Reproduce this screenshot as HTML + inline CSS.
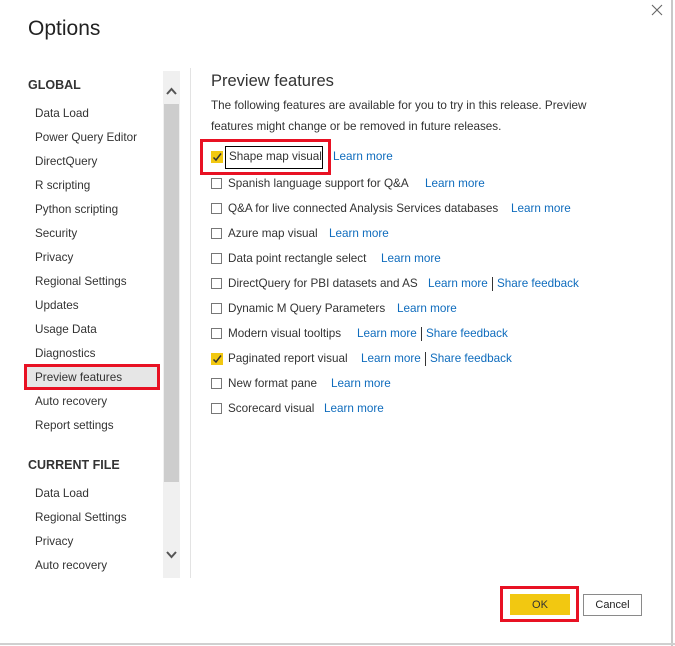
<!DOCTYPE html>
<html><head><meta charset="utf-8"><style>
body{margin:0;width:675px;height:646px;background:#fff;font-family:"Segoe UI","Liberation Sans",sans-serif;color:#333;position:relative;overflow:hidden}
.a{position:absolute;white-space:nowrap;font-size:11.7px;line-height:16px}
.n{left:35px;color:#333}
.h{left:28px;font-size:12.5px;font-weight:bold;color:#333}
.l{color:#0f6cbd}
.cb{position:absolute;left:211px;width:9px;height:9px;border:1.5px solid #777;background:#fff}
.ck{position:absolute;left:211px;width:12px;height:12px;background:#f2c811}
.sep{position:absolute;width:1px;height:14px;background:#333}
</style></head><body>
<div style="position:absolute;left:671px;top:0;width:2px;height:646px;background:#c8c8c8"></div>
<div style="position:absolute;left:0;top:643px;width:675px;height:2px;background:#d0d0d0"></div>
<svg style="position:absolute;left:650px;top:3px" width="14" height="14"><path d="M2 2 L12 12 M12 2 L2 12" stroke="#666" stroke-width="1.1" fill="none"/></svg>
<div class="a" style="left:28px;top:16px;font-size:21px;line-height:26px;color:#222">Options</div>

<div style="position:absolute;left:163px;top:71px;width:17px;height:507px;background:#f0f0f0"></div>
<div style="position:absolute;left:164px;top:104px;width:15px;height:378px;background:#cdcdcd"></div>
<svg style="position:absolute;left:164px;top:86px" width="15" height="10"><path d="M3 8 L7.5 3 L12 8" stroke="#555" stroke-width="2" fill="none"/></svg>
<svg style="position:absolute;left:164px;top:550px" width="15" height="10"><path d="M3 2 L7.5 7 L12 2" stroke="#555" stroke-width="2" fill="none"/></svg>
<div style="position:absolute;left:190px;top:68px;width:1px;height:510px;background:#e3e3e3"></div>

<div class="a h" style="top:77px">GLOBAL</div>
<div class="a n" style="top:106px">Data Load</div>
<div class="a n" style="top:130px">Power Query Editor</div>
<div class="a n" style="top:154px">DirectQuery</div>
<div class="a n" style="top:178px">R scripting</div>
<div class="a n" style="top:202px">Python scripting</div>
<div class="a n" style="top:226px">Security</div>
<div class="a n" style="top:250px">Privacy</div>
<div class="a n" style="top:274px">Regional Settings</div>
<div class="a n" style="top:298px">Updates</div>
<div class="a n" style="top:322px">Usage Data</div>
<div class="a n" style="top:346px">Diagnostics</div>
<div style="position:absolute;left:24px;top:364px;width:130px;height:20px;border:3px solid #e81123;background:#e6e6e6"></div>
<div class="a n" style="top:370px">Preview features</div>
<div class="a n" style="top:394px">Auto recovery</div>
<div class="a n" style="top:418px">Report settings</div>
<div class="a h" style="top:457px">CURRENT FILE</div>
<div class="a n" style="top:486px">Data Load</div>
<div class="a n" style="top:510px">Regional Settings</div>
<div class="a n" style="top:534px">Privacy</div>
<div class="a n" style="top:558px">Auto recovery</div>

<div class="a" style="left:211px;top:70px;font-size:16.5px;line-height:22px;color:#333">Preview features</div>
<div class="a" style="left:211px;top:98px;color:#333">The following features are available for you to try in this release. Preview</div>
<div class="a" style="left:211px;top:119px;color:#333">features might change or be removed in future releases.</div>

<div style="position:absolute;left:200px;top:139px;width:125px;height:30px;border:3px solid #e81123"></div>
<div style="position:absolute;left:225px;top:146px;width:96px;height:21px;border:1px solid #000"></div>
<div class="ck" style="top:151px"></div><svg style="position:absolute;left:211px;top:151px" width="12" height="12"><path d="M2.5 6.5 L5 9 L10 2.5" stroke="#333" stroke-width="1.5" fill="none"/></svg>
<div class="a" style="left:229px;top:149px">Shape map visual</div><div class="a l" style="left:333px;top:149px">Learn more</div>

<div class="cb" style="top:178px"></div><div class="a" style="left:228px;top:176px">Spanish language support for Q&amp;A</div><div class="a l" style="left:425px;top:176px">Learn more</div>
<div class="cb" style="top:203px"></div><div class="a" style="left:228px;top:201px">Q&amp;A for live connected Analysis Services databases</div><div class="a l" style="left:511px;top:201px">Learn more</div>
<div class="cb" style="top:228px"></div><div class="a" style="left:228px;top:226px">Azure map visual</div><div class="a l" style="left:329px;top:226px">Learn more</div>
<div class="cb" style="top:253px"></div><div class="a" style="left:228px;top:251px">Data point rectangle select</div><div class="a l" style="left:381px;top:251px">Learn more</div>
<div class="cb" style="top:278px"></div><div class="a" style="left:228px;top:276px">DirectQuery for PBI datasets and AS</div><div class="a l" style="left:428px;top:276px">Learn more</div><div class="sep" style="left:492px;top:277px"></div><div class="a l" style="left:497px;top:276px">Share feedback</div>
<div class="cb" style="top:303px"></div><div class="a" style="left:228px;top:301px">Dynamic M Query Parameters</div><div class="a l" style="left:397px;top:301px">Learn more</div>
<div class="cb" style="top:328px"></div><div class="a" style="left:228px;top:326px">Modern visual tooltips</div><div class="a l" style="left:357px;top:326px">Learn more</div><div class="sep" style="left:421px;top:327px"></div><div class="a l" style="left:426px;top:326px">Share feedback</div>
<div class="ck" style="top:353px"></div><svg style="position:absolute;left:211px;top:353px" width="12" height="12"><path d="M2.5 6.5 L5 9 L10 2.5" stroke="#333" stroke-width="1.5" fill="none"/></svg>
<div class="a" style="left:228px;top:351px">Paginated report visual</div><div class="a l" style="left:361px;top:351px">Learn more</div><div class="sep" style="left:425px;top:352px"></div><div class="a l" style="left:430px;top:351px">Share feedback</div>
<div class="cb" style="top:378px"></div><div class="a" style="left:228px;top:376px">New format pane</div><div class="a l" style="left:331px;top:376px">Learn more</div>
<div class="cb" style="top:403px"></div><div class="a" style="left:228px;top:401px">Scorecard visual</div><div class="a l" style="left:324px;top:401px">Learn more</div>

<div style="position:absolute;left:500px;top:586px;width:73px;height:30px;border:3px solid #e81123"></div>
<div style="position:absolute;left:510px;top:594px;width:60px;height:21px;background:#f2c811;font-size:11px;line-height:22px;text-align:center;color:#333">OK</div>
<div style="position:absolute;left:583px;top:594px;width:57px;height:20px;border:1px solid #8a8a8a;font-size:11px;line-height:21px;text-align:center;color:#222">Cancel</div>
</body></html>
